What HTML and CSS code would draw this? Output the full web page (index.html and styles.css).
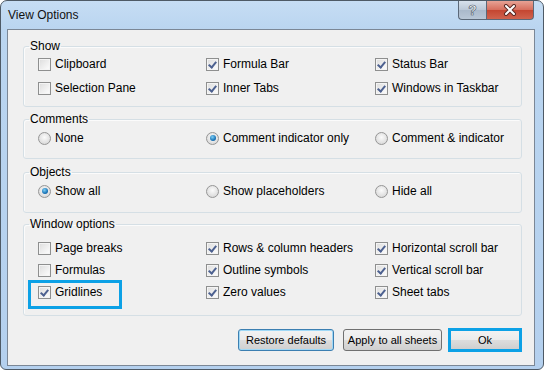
FILE: index.html
```html
<!DOCTYPE html>
<html lang="en">
<head>
    <meta charset="UTF-8">
    <title>View Options</title>
    <link rel="stylesheet" href="styles.css">
</head>
<body>
    <div class="window">
        <div class="titlebar">
            <span class="title">View Options</span>
            <div class="caption-btns">
                <span class="cap help">?</span>
                <span class="cap close">
                    <svg width="16" height="12" viewBox="0 0 16 12">
                        <path d="M4 2 L12 10 M12 2 L4 10" stroke="#5a2a24" stroke-width="4" stroke-linecap="round"/>
                        <path d="M4 2 L12 10 M12 2 L4 10" stroke="#fff" stroke-width="2" stroke-linecap="round"/>
                    </svg>
                </span>
            </div>
        </div>

        <div class="panel">
            <fieldset class="group show">
                <legend>Show</legend>
                <div class="grid">
                    <label class="opt"><span class="box"></span>Clipboard</label>
                    <label class="opt"><span class="box checked"></span>Formula Bar</label>
                    <label class="opt"><span class="box checked"></span>Status Bar</label>
                    <label class="opt"><span class="box"></span>Selection Pane</label>
                    <label class="opt"><span class="box checked"></span>Inner Tabs</label>
                    <label class="opt"><span class="box checked"></span>Windows in Taskbar</label>
                </div>
            </fieldset>

            <fieldset class="group comments">
                <legend>Comments</legend>
                <div class="grid">
                    <label class="opt"><span class="radio"></span>None</label>
                    <label class="opt"><span class="radio on"></span>Comment indicator only</label>
                    <label class="opt"><span class="radio"></span>Comment &amp; indicator</label>
                </div>
            </fieldset>

            <fieldset class="group objects">
                <legend>Objects</legend>
                <div class="grid">
                    <label class="opt"><span class="radio on"></span>Show all</label>
                    <label class="opt"><span class="radio"></span>Show placeholders</label>
                    <label class="opt"><span class="radio"></span>Hide all</label>
                </div>
            </fieldset>

            <fieldset class="group window-opts">
                <legend>Window options</legend>
                <div class="grid">
                    <label class="opt"><span class="box"></span>Page breaks</label>
                    <label class="opt"><span class="box checked"></span>Rows &amp; column headers</label>
                    <label class="opt"><span class="box checked"></span>Horizontal scroll bar</label>
                    <label class="opt"><span class="box"></span>Formulas</label>
                    <label class="opt"><span class="box checked"></span>Outline symbols</label>
                    <label class="opt"><span class="box checked"></span>Vertical scroll bar</label>
                    <label class="opt marked"><span class="box checked"></span>Gridlines</label>
                    <label class="opt"><span class="box checked"></span>Zero values</label>
                    <label class="opt"><span class="box checked"></span>Sheet tabs</label>
                </div>
            </fieldset>

            <div class="actions">
                <button class="btn restore">Restore defaults</button>
                <button class="btn apply">Apply to all sheets</button>
                <button class="btn ok">Ok</button>
            </div>
        </div>
    </div>
</body>
</html>
```

FILE: styles.css
```css
*, *::before, *::after {
    box-sizing: border-box;
}
body {
    margin: 0;
    background-color: #ffffff;
    font-family: 'Liberation Sans', Arial, sans-serif;
}
.window {
    width: 544px;
    height: 370px;
    border: 1px solid #4e5a66;
    border-radius: 7px 7px 6px 6px;
    background: linear-gradient(to bottom, #c6ddf4 0px, #bad5f0 28px, #b4d0ee 100%);
    display: flex;
    flex-direction: column;
    overflow: hidden;
}
.titlebar {
    height: 28px;
    display: flex;
    align-items: flex-start;
    flex-shrink: 0;
}
.title {
    font-size: 12px;
    color: #111;
    margin: 7px 0 0 7px;
}
.caption-btns {
    margin-left: auto;
    margin-right: 9px;
    margin-top: -1px;
    display: flex;
}
.cap {
    height: 20px;
    display: flex;
    align-items: center;
    justify-content: center;
    border: 1px solid #5b6878;
    border-top: none;
}
.help {
    width: 28px;
    border-radius: 0 0 0 4px;
    border-right: none;
    background: linear-gradient(to bottom, #dbe4ee, #bcc9d8 50%, #a9b8ca 51%, #b9c7d7);
    color: #fff;
    font-size: 14px;
    font-weight: bold;
    -webkit-text-stroke: 0.6px #4a5565;
}
.close {
    width: 48px;
    border-radius: 0 0 4px 0;
    background: linear-gradient(to bottom, #e9a89b, #d7705f 50%, #c4442f 51%, #d0634e);
}
.panel {
    flex: 1;
    margin: 0 8px 3px 6px;
    border: 1px solid #7b8796;
    background-color: #f0f0f0;
    padding: 9px 12px 0 15px;
    display: flex;
    flex-direction: column;
}
.group {
    margin: 0;
    border: 1px solid #d5dfe5;
    border-radius: 3px;
    padding: 0 0 0 14px;
    box-shadow: inset 1px 1px 0 #fbfbfb;
}
.group legend {
    font-size: 12px;
    line-height: 14px;
    padding: 0 1px;
    margin-left: -9px;
    color: #000;
}
.grid {
    display: grid;
    grid-template-columns: 168px 169px 1fr;
}
.show {
    padding-top: 3px;
    padding-bottom: 10px;
}
.show .grid {
    row-gap: 8px;
}
.comments {
    margin-top: 5px;
    padding-top: 4px;
    padding-bottom: 12px;
}
.objects {
    margin-top: 6px;
    padding-top: 4px;
    padding-bottom: 13px;
}
.window-opts {
    margin-top: 4px;
    padding-top: 9px;
    padding-bottom: 15px;
}
.window-opts .grid {
    row-gap: 6px;
}
.opt {
    height: 16px;
    display: flex;
    align-items: center;
    gap: 4px;
    font-size: 12px;
    color: #000;
    white-space: nowrap;
}
.box {
    width: 13px;
    height: 13px;
    border: 1px solid #8e8f8f;
    background: linear-gradient(135deg, #dcdcdc, #f4f4f4 70%, #fdfdfd);
    box-shadow: inset 0 0 0 1px #f4f4f4;
    flex-shrink: 0;
    position: relative;
}
.box.checked::after {
    content: "";
    position: absolute;
    left: 3px;
    top: 1px;
    width: 5px;
    height: 8px;
    border: solid #4d6190;
    border-width: 0 2px 2px 0;
    transform: rotate(40deg);
}
.radio {
    width: 13px;
    height: 13px;
    border-radius: 50%;
    border: 1px solid #969696;
    background: radial-gradient(circle at 50% 40%, #fbfbfb, #e2e2e2 60%, #cfcfcf);
    flex-shrink: 0;
    position: relative;
}
.radio.on::after {
    content: "";
    position: absolute;
    left: 2.5px;
    top: 2.5px;
    width: 6px;
    height: 6px;
    border-radius: 50%;
    background: radial-gradient(circle at 40% 35%, #7fd0f5, #1b75b8 60%, #0d4f88);
}
.marked {
    position: relative;
}
.marked::after {
    content: "";
    position: absolute;
    left: -10px;
    top: -4px;
    width: 94px;
    height: 29px;
    border: 3px solid #0ca1e6;
}
.actions {
    margin-top: 12px;
    display: flex;
    justify-content: flex-end;
    align-items: center;
}
.btn {
    font-family: 'Liberation Sans', Arial, sans-serif;
    font-size: 11px;
    color: #000;
    height: 22px;
    padding: 0;
    border: 1px solid #707070;
    border-radius: 3px;
    background: linear-gradient(to bottom, #f2f2f2, #ebebeb 50%, #dddddd 51%, #cfcfcf);
}
.restore {
    width: 96px;
    border-color: #3c7fb1;
    box-shadow: inset 0 0 0 1px #9fd8f6;
}
.apply {
    width: 99px;
    margin-left: 9px;
}
.ok {
    width: 74px;
    height: 24px;
    margin-left: 6px;
    border: 3px solid #0ca1e6;
    border-radius: 0;
}
```
